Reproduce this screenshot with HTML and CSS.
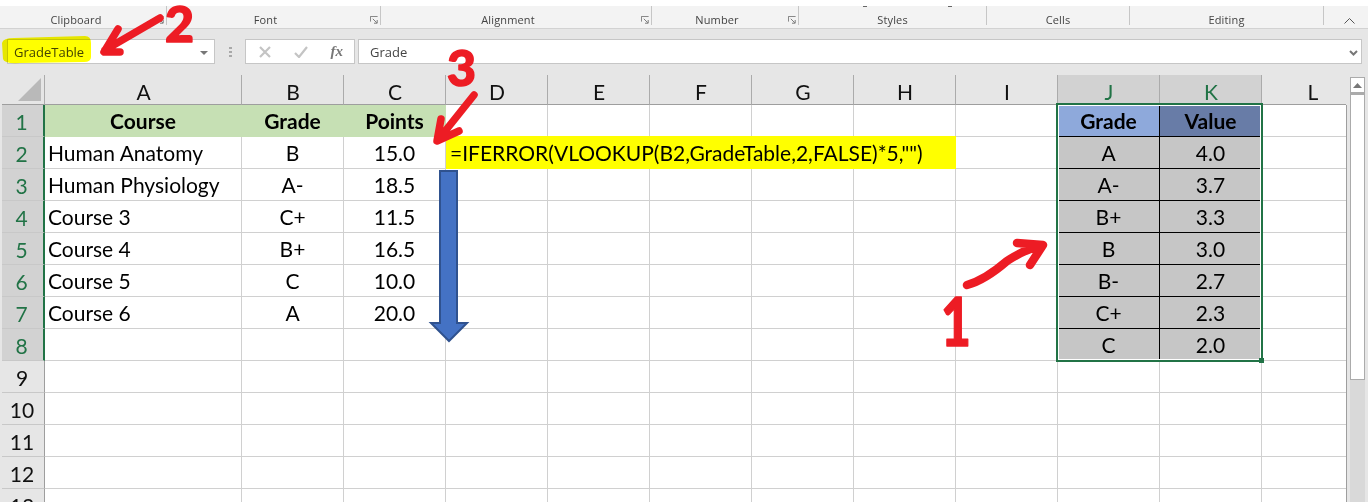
FILE: index.html
```html
<!DOCTYPE html>
<html lang="en">
<head>
<meta charset="utf-8">
<title>GradeTable</title>
<link rel="stylesheet" href="styles.css">
</head>
<body>
<div class="app">
  <div class="ribbon">
    <div class="group g-clip has-launcher"><span>Clipboard</span>
      <svg class="launcher" width="8" height="8" viewBox="0 0 10 10"><path d="M.5 7V.5H9.500M3.500 3.500 8.500 8.500M9 5V9H5"/></svg></div>
    <div class="group g-font has-launcher"><span>Font</span>
      <svg class="launcher" width="8" height="8" viewBox="0 0 10 10"><path d="M.5 7V.5H9.500M3.500 3.500 8.500 8.500M9 5V9H5"/></svg></div>
    <div class="group g-align has-launcher"><span>Alignment</span>
      <svg class="launcher" width="8" height="8" viewBox="0 0 10 10"><path d="M.5 7V.5H9.500M3.500 3.500 8.500 8.500M9 5V9H5"/></svg></div>
    <div class="group g-num has-launcher"><span>Number</span>
      <svg class="launcher" width="8" height="8" viewBox="0 0 10 10"><path d="M.5 7V.5H9.500M3.500 3.500 8.500 8.500M9 5V9H5"/></svg></div>
    <div class="group g-styles"><span>Styles</span></div>
    <div class="group g-cells"><span>Cells</span></div>
    <div class="group g-edit"><span>Editing</span></div>
    <svg class="collapse" width="11" height="6" viewBox="0 0 11 6"><path d="M.5 5.500 5.500.5 10.500 5.500"/></svg>
  </div>

  <div class="formula-bar">
    <div class="name-box"><span>GradeTable</span>
      <svg class="caret" width="8" height="4" viewBox="0 0 8 4"><path d="M0 0H8L4 4Z"/></svg></div>
    <svg class="grip" width="3" height="10" viewBox="0 0 3 10"><path d="M0 0H3V2H0ZM0 4H3V6H0ZM0 8H3V10H0Z"/></svg>
    <div class="fx-buttons">
      <svg class="fx-icon" width="12" height="12" viewBox="0 0 12 12"><path d="M1 1 11 11M11 1 1 11"/></svg>
      <svg class="fx-icon" width="14" height="12" viewBox="0 0 14 12"><path d="M1 7 5 11 13 1"/></svg>
      <span class="fx-label">fx</span>
    </div>
    <div class="formula-input"><span>Grade</span>
      <svg class="chevron" width="9" height="6" viewBox="0 0 9 6"><path d="M1 1 4.500 4.500 8 1"/></svg></div>
  </div>

  <div class="sheet-wrap">
    <div class="sheet">
      <div class="col-heads">
        <div class="corner"><svg width="23" height="23" viewBox="0 0 23 23"><path d="M23 0V23H0Z"/></svg></div>
        <div class="ch">A</div><div class="ch">B</div><div class="ch">C</div><div class="ch">D</div><div class="ch">E</div><div class="ch">F</div><div class="ch">G</div><div class="ch">H</div><div class="ch">I</div><div class="ch sel">J</div><div class="ch sel">K</div><div class="ch last">L</div>
      </div>
      <div class="body">
        <div class="row">
          <div class="rh sel">1</div>
          <div class="c hd">Course</div><div class="c hd">Grade</div><div class="c hd">Points</div>
          <div class="c"></div><div class="c"></div><div class="c"></div><div class="c"></div><div class="c"></div><div class="c"></div>
          <div class="c tj">Grade</div><div class="c tk">Value</div><div class="c"></div>
        </div>
        <div class="row">
          <div class="rh sel">2</div>
          <div class="c l">Human Anatomy</div><div class="c">B</div><div class="c">15.0</div>
          <div class="c formula">=IFERROR(VLOOKUP(B2,GradeTable,2,FALSE)*5,"")</div><div class="c"></div>
          <div class="c t v">A</div><div class="c t">4.0</div><div class="c"></div>
        </div>
        <div class="row">
          <div class="rh sel">3</div>
          <div class="c l">Human Physiology</div><div class="c">A-</div><div class="c">18.5</div>
          <div class="c"></div><div class="c"></div><div class="c"></div><div class="c"></div><div class="c"></div><div class="c"></div>
          <div class="c t v">A-</div><div class="c t">3.7</div><div class="c"></div>
        </div>
        <div class="row">
          <div class="rh sel">4</div>
          <div class="c l">Course 3</div><div class="c">C+</div><div class="c">11.5</div>
          <div class="c"></div><div class="c"></div><div class="c"></div><div class="c"></div><div class="c"></div><div class="c"></div>
          <div class="c t v">B+</div><div class="c t">3.3</div><div class="c"></div>
        </div>
        <div class="row">
          <div class="rh sel">5</div>
          <div class="c l">Course 4</div><div class="c">B+</div><div class="c">16.5</div>
          <div class="c"></div><div class="c"></div><div class="c"></div><div class="c"></div><div class="c"></div><div class="c"></div>
          <div class="c t v">B</div><div class="c t">3.0</div><div class="c"></div>
        </div>
        <div class="row">
          <div class="rh sel">6</div>
          <div class="c l">Course 5</div><div class="c">C</div><div class="c">10.0</div>
          <div class="c"></div><div class="c"></div><div class="c"></div><div class="c"></div><div class="c"></div><div class="c"></div>
          <div class="c t v">B-</div><div class="c t">2.7</div><div class="c"></div>
        </div>
        <div class="row">
          <div class="rh sel">7</div>
          <div class="c l">Course 6</div><div class="c">A</div><div class="c">20.0</div>
          <div class="c"></div><div class="c"></div><div class="c"></div><div class="c"></div><div class="c"></div><div class="c"></div>
          <div class="c t v">C+</div><div class="c t">2.3</div><div class="c"></div>
        </div>
        <div class="row">
          <div class="rh sel">8</div>
          <div class="c"></div><div class="c"></div><div class="c"></div>
          <div class="c"></div><div class="c"></div><div class="c"></div><div class="c"></div><div class="c"></div><div class="c"></div>
          <div class="c t v">C</div><div class="c t">2.0</div><div class="c"></div>
        </div>
        <div class="row">
          <div class="rh">9</div>
          <div class="c"></div><div class="c"></div><div class="c"></div><div class="c"></div><div class="c"></div><div class="c"></div><div class="c"></div><div class="c"></div><div class="c"></div><div class="c"></div><div class="c"></div><div class="c"></div>
        </div>
        <div class="row">
          <div class="rh">10</div>
          <div class="c"></div><div class="c"></div><div class="c"></div><div class="c"></div><div class="c"></div><div class="c"></div><div class="c"></div><div class="c"></div><div class="c"></div><div class="c"></div><div class="c"></div><div class="c"></div>
        </div>
        <div class="row">
          <div class="rh">11</div>
          <div class="c"></div><div class="c"></div><div class="c"></div><div class="c"></div><div class="c"></div><div class="c"></div><div class="c"></div><div class="c"></div><div class="c"></div><div class="c"></div><div class="c"></div><div class="c"></div>
        </div>
        <div class="row">
          <div class="rh">12</div>
          <div class="c"></div><div class="c"></div><div class="c"></div><div class="c"></div><div class="c"></div><div class="c"></div><div class="c"></div><div class="c"></div><div class="c"></div><div class="c"></div><div class="c"></div><div class="c"></div>
        </div>
        <div class="row">
          <div class="rh">13</div>
          <div class="c"></div><div class="c"></div><div class="c"></div><div class="c"></div><div class="c"></div><div class="c"></div><div class="c"></div><div class="c"></div><div class="c"></div><div class="c"></div><div class="c"></div><div class="c"></div>
        </div>
      </div>
      <div class="selection"><i class="handle"></i></div>
    </div>
    <div class="scrollbar">
      <div class="sb-up"><svg width="9" height="5" viewBox="0 0 9 5"><path d="M0 5 4.500 0 9 5Z"/></svg></div>
      <div class="sb-thumb"></div>
      <div class="sb-track"></div>
    </div>
  </div>

  <svg class="highlight" width="100" height="70" viewBox="0 0 100 70"><path d="M2 43Q3 38 14 38L85 36Q91 36 91 43V57Q91 62 84 62L20 63Q4 64 3 59Z"/></svg>
  <svg class="marks" width="1368" height="502" viewBox="0 0 1368 502">
    <path class="blue" d="M440 171H457V323H467L449 341 431 323H440Z"/>
    <path class="red" d="M160 18 105 50M118 29 104 52 120 52"/>
    <path class="red" d="M474 95 438 140M441 119 437 141 459 131"/>
    <path class="red red-thick" d="M967 285Q985 280 1007 261 1025 249 1043 245M1017 243 1043 245 1030 265"/>
    <text class="num" x="165" y="42">2</text>
    <text class="num" x="447" y="86">3</text>
    <text class="num num-one" transform="translate(941 346) scale(.78 1)">1</text>
  </svg>
</div>
</body>
</html>
```
FILE: styles.css
```css
* { box-sizing: border-box; }
html, body { margin: 0; padding: 0; background: #fff; }
.app {
  position: relative;
  width: 1368px;
  height: 502px;
  overflow: hidden;
  padding-top: 6px;
  background: #fff;
  display: flex;
  flex-direction: column;
}

/* ribbon */
.ribbon {
  height: 23px;
  flex: none;
  display: flex;
  padding-left: 2px;
  background: #f3f3f3;
  border-bottom: 1px solid #d2d2d2;
  font: 11px/1 "Open Sans", sans-serif;
  color: #444;
  position: relative;
}
.group {
  height: 19px;
  display: flex;
  align-items: flex-end;
  justify-content: center;
  border-right: 1px solid #c6c6c6;
  position: relative;
  letter-spacing: .15px;
}
.has-launcher { padding-right: 16px; }
.g-clip { width: 165px; }
.g-font { width: 214px; }
.g-align { width: 271px; }
.g-num { width: 147px; }
.g-styles { width: 188px; }
.g-cells { width: 143px; }
.g-edit { width: 194px; }
.g-styles::before, .g-styles::after {
  content: "";
  position: absolute;
  top: 0;
  width: 4px;
  height: 1px;
  background: #666;
}
.g-styles::before { left: 64px; }
.g-styles::after { left: 149px; }
.launcher { position: absolute; right: 2px; bottom: 1px; fill: none; stroke: #777; stroke-width: 1.200; }
.collapse { position: absolute; left: 1344px; top: 12px; fill: none; stroke: #555; stroke-width: 1; }

/* formula bar */
.formula-bar {
  height: 46px;
  flex: none;
  background: #e6e6e6;
  padding: 10px 6px 11px 7px;
  display: flex;
  align-items: stretch;
  font: 13px/1 "Open Sans", sans-serif;
  color: #444;
}
.name-box, .fx-buttons, .formula-input {
  background: #fff;
  border: 1px solid #c6c6c6;
  display: flex;
  align-items: center;
}
.name-box, .formula-input { padding-top: 2px; }
.name-box { width: 208px; padding-left: 6px; padding-right: 6px; justify-content: space-between; }
.caret { fill: #777; }
.grip { fill: #a8a8a8; align-self: center; margin: 0 13px 0 14px; }
.fx-buttons { width: 110px; padding: 0 11px 0 13px; justify-content: space-between; }
.fx-icon { fill: none; stroke: #c4c4c4; stroke-width: 2.200; }
.fx-label { font: italic bold 15px/1 "Liberation Serif", serif; color: #777; }
.formula-input { flex: 1; margin-left: 3px; padding-left: 11px; padding-right: 3px; justify-content: space-between; }
.chevron { fill: none; stroke: #777; stroke-width: 2; }

/* sheet */
.sheet-wrap {
  flex: 1;
  min-height: 0;
  display: flex;
  background: #e6e6e6;
  padding-left: 2px;
  font: 21px/1 "Lato", sans-serif;
  color: #000;
}
.sheet { width: 1345px; position: relative; flex: none; }
.col-heads, .row {
  display: grid;
  grid-template-columns: 43px 197px repeat(10, 102px) 84px;
}
.col-heads { height: 30px; }
.corner {
  border-right: 1px solid #ababab;
  border-bottom: 1px solid #9e9e9e;
  display: flex;
  justify-content: flex-end;
  padding: 3px 3px 0 0;
}
.corner svg { fill: #b9b9b9; }
.ch {
  border-right: 1px solid #ababab;
  border-bottom: 1px solid #9e9e9e;
  display: flex;
  align-items: center;
  justify-content: center;
  padding: 3px 0 0 1px;
  color: #111;
}
.ch.last { border-right: 0; padding-left: 18px; }
.ch.sel { background: #d2d2d2; color: #217346; }
.body { background: #fff; border-right: 1px solid #9e9e9e; }
.row { height: 32px; }
.rh {
  background: #e6e6e6;
  border-right: 1px solid #9e9e9e;
  border-bottom: 1px solid #c8c8c8;
  display: flex;
  align-items: center;
  justify-content: center;
  padding: 1px 2px 0 0;
  color: #111;
}
.rh.sel { background: #d2d2d2; color: #217346; border-right: 2px solid #217346; }
.c {
  border-right: 1px solid #d0d0d0;
  border-bottom: 1px solid #d0d0d0;
  display: flex;
  align-items: center;
  justify-content: center;
  white-space: nowrap;
  min-width: 0;
}
.c:last-child { border-right: 0; }
.c.l { justify-content: flex-start; padding-left: 3px; }
.c.hd { background: #c6e0b4; border-color: #c6e0b4; font-weight: 700; }
.c.formula {
  grid-column: span 5;
  background: #ff0;
  border-color: #ff0;
  justify-content: flex-start;
  padding-left: 4px;
  box-shadow: 0 -1px 0 #ff0;
}
.c.tj, .c.tk { font-weight: 700; border-bottom-color: #000; }
.c.tj { background: #8ea9db; border-right-color: #000; }
.c.tk { background: #687ca7; }
.c.t { background: #c6c6c6; border-bottom-color: #000; }
.c.v { border-right-color: #000; }
.selection {
  position: absolute;
  left: 1054px;
  top: 28px;
  width: 207px;
  height: 259px;
  border: 2px solid #217346;
  box-shadow: inset 0 0 0 1px #fff;
}
.handle {
  position: absolute;
  right: -3px;
  bottom: -3px;
  width: 5px;
  height: 5px;
  background: #217346;
}

/* scrollbar */
.scrollbar {
  flex: 1;
  display: flex;
  flex-direction: column;
  padding: 2px 3px 0 3px;
}
.sb-up {
  height: 16px;
  flex: none;
  background: #fff;
  border: 1px solid #ababab;
  display: flex;
  align-items: center;
  justify-content: center;
}
.sb-up svg { fill: #777; }
.sb-thumb {
  height: 287px;
  flex: none;
  background: #fff;
  border: 1px solid #ababab;
  border-top-width: 2px;
}
.sb-track { flex: 1; background: #d9d9d9; }

/* annotations */
.highlight {
  position: absolute;
  left: 0;
  top: 0;
  fill: #ff0;
  mix-blend-mode: multiply;
}
.marks { position: absolute; left: 0; top: 0; pointer-events: none; }
.red { fill: none; stroke: #ed1c24; stroke-width: 7.500; stroke-linecap: round; stroke-linejoin: round; }
.red-thick { stroke-width: 8.500; }
.blue { fill: #4472c4; stroke: #2f528f; stroke-width: 2; }
.num {
  font: 900 50px "Lato", sans-serif;
  fill: #ed1c24;
  stroke: #ed1c24;
  stroke-width: 1.500;
  stroke-linejoin: round;
}
.num-one { font-size: 66px; }
```
